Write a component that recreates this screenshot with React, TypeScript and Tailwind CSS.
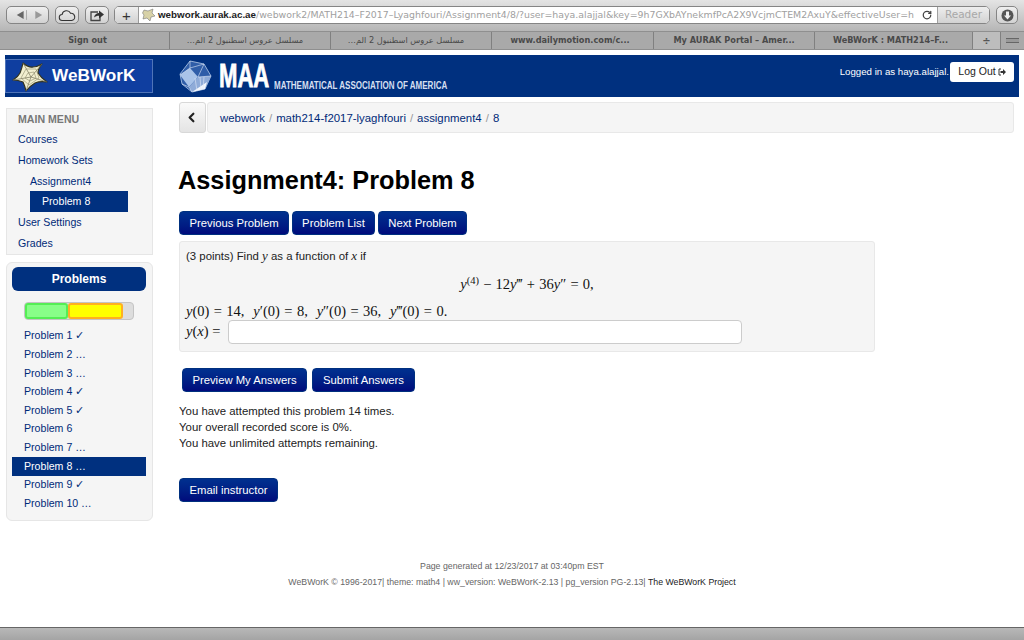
import { ChevronLeft, RotateCw } from "lucide-react";

const tabs = ["Sign out", "مسلسل عروس اسطنبول 2 الم…", "مسلسل عروس اسطنبول 2 الم…", "www.dailymotion.com/c...", "My AURAK Portal – Amer...", "WeBWorK : MATH214–F..."];
const tabWidths = ["w-[170px] pl-[6px]", "w-[161px] pr-[10px]", "w-[161px] pr-[10px]", "w-[162px] pr-[5px]", "w-[161px]", "w-[158px] pr-[6px]"];
const problems = ["Problem 1 ✓", "Problem 2 …", "Problem 3 …", "Problem 4 ✓", "Problem 5 ✓", "Problem 6", "Problem 7 …", "Problem 8 …", "Problem 9 ✓", "Problem 10 …"];

function ChromeButton({ className, children }: { className: string; children: React.ReactNode }) {
  return (
    <div className={`flex h-[18px] items-center justify-center rounded-[5px] border border-[#858585] bg-gradient-to-b from-[#efefef] to-[#d2d2d2] text-[#444] ${className}`}>
      {children}
    </div>
  );
}

function Toolbar() {
  return (
    <div className="flex h-[31px] items-center bg-gradient-to-b from-[#e4e4e4] to-[#b6b6b6] pl-[6px] pr-[6px] pb-[1px]">
      <ChromeButton className="w-[43px]">
        <svg width="42" height="16" viewBox="0 0 42 16">
          <path d="M20 3v10" stroke="#aaa" />
          <path d="M10 8l7-4v8z" fill="#666" />
          <path d="M36 8l-7-4v8z" fill="#999" />
        </svg>
      </ChromeButton>
      <ChromeButton className="ml-[6px] w-[24px]">
        <svg width="18" height="13" viewBox="0 0 18 13" fill="none" stroke="#333" strokeWidth="1.1">
          <path d="M4.5 11.5a3 3 0 0 1-.4-6 4.5 4.5 0 0 1 8.5-1.2 3.6 3.6 0 0 1 1 7.2z" />
        </svg>
      </ChromeButton>
      <ChromeButton className="ml-[6px] w-[24px]">
        <svg width="16" height="13" viewBox="0 0 16 13" fill="none">
          <path d="M9 3H2v8.5h9V8" stroke="#444" strokeWidth="1.3" />
          <path d="M5 8.5c.5-3 2.500-4.500 5-4.500V1.500l5 4-5 4V6.800c-2 0-3.500.5-5 1.700z" fill="#333" />
        </svg>
      </ChromeButton>
      <div className="ml-[5px] flex h-[18px] flex-1 overflow-hidden rounded-[5px] border border-[#858585] bg-white">
        <div className="flex w-[24px] shrink-0 items-center justify-center border-r border-[#9a9a9a] bg-gradient-to-b from-[#efefef] to-[#d2d2d2] text-[15px] leading-none text-[#333]">+</div>
        <div className="flex min-w-0 flex-1 items-center pl-[3px]">
          <svg className="shrink-0" width="14" height="14" viewBox="0 0 14 14">
            <path d="M2 2l4 1 5-2-1 4 3 3-4 1-1 4-3-3-4 1 1-4-1.500-2z" fill="#d8d2a8" stroke="#777" strokeWidth=".6" />
          </svg>
          <div className="ml-[2px] min-w-0 flex-1 whitespace-nowrap font-['DejaVu_Sans',sans-serif] text-[9.400px] text-[#a0a0a0]">
            <span className="font-['Liberation_Sans',sans-serif] text-[9.800px] font-bold text-[#222]">webwork.aurak.ac.ae</span>/webwork2/MATH214–F2017–Lyaghfouri/Assignment4/8/?user=haya.alajjal&amp;key=9h7GXbAYnekmfPcA2X9VcjmCTEM2AxuY&amp;effectiveUser=h
          </div>
          <RotateCw className="mx-[5px] shrink-0 text-[#444]" size={10} strokeWidth={3} />
        </div>
        <div className="flex w-[52px] shrink-0 items-center justify-center border-l border-[#a0a0a0] bg-gradient-to-b from-[#eeeeee] to-[#d2d2d2] font-['DejaVu_Sans',sans-serif] text-[10.500px] text-[#a8a8a8]">Reader</div>
      </div>
      <ChromeButton className="ml-[6px] w-[22px]">
        <svg width="13" height="13" viewBox="0 0 13 13">
          <circle cx="6.500" cy="6.500" r="6" fill="#555" />
          <path d="M5 2.500h3v4h2l-3.500 4-3.500-4h2z" fill="#eee" />
        </svg>
      </ChromeButton>
    </div>
  );
}

function TabBar() {
  return (
    <div className="flex h-[19px] items-stretch border-y border-[#8f8f8f] bg-[#a9a9a9] font-['DejaVu_Sans',sans-serif] text-[8.200px] font-bold text-[#4a4a4a]">
      {tabs.map((tab, i) => (
        <div key={i} className={`flex items-center justify-center whitespace-nowrap border-r border-[#808080] ${tabWidths[i]}`}>
          {tab.startsWith("م") ? <span dir="rtl" className="text-[8.200px] font-normal">{tab}</span> : tab}
        </div>
      ))}
      <div className="flex w-[28px] items-center justify-center border-r border-[#808080] bg-[#bdbdbd] text-[10px] text-[#555]">÷</div>
      <div className="flex flex-1 items-center justify-center">
        <div className="h-[5px] w-[13px] border-y border-[#666] bg-[#999]" />
      </div>
    </div>
  );
}

function StarLogo() {
  return (
    <svg className="shrink-0" width="36" height="33" viewBox="0 0 36 33">
      <path d="M11 3Q17 8 21 7Q25 7 30 4Q26 9 26 13Q29 18 35 22Q28 21 23 23Q18 26 14 31Q13 26 11 22Q6 20 1 20Q6 17 8 13Q10 8 11 3z" fill="#f2efcf" stroke="#33331f" strokeWidth="1.200" strokeLinejoin="round" />
      <path d="M19 17L11 3M19 17L30 4M19 17L35 22M19 17L14 31M19 17L1 20" fill="none" stroke="#77745a" strokeWidth=".7" />
      <path d="M14 9L24 9L27 18L17 25L9 18zM16 13L22 12L24 18L18 21L13 18z" fill="none" stroke="#8f8c6c" strokeWidth=".6" />
    </svg>
  );
}

function MaaLogo() {
  return (
    <svg className="shrink-0" width="33" height="33" viewBox="0 0 33 33">
      <path d="M11 1l14 3 7 12-6 13-13 3L3 24 1 14z" fill="#2f5da8" stroke="#b9cdea" strokeWidth=".8" />
      <path d="M1 15L11 8l8 9-9 10z" fill="#a9c3e8" />
      <path d="M19 17l13-1-6 13-13 3-3-5z" fill="#8fabd8" />
      <path d="M13 32l13-3 2-7z" fill="#f2f6fc" />
      <path d="M11 1v7M11 8L25 4M25 4l-6 13M19 17L32 16M11 8L1 15M10 27L3 24M10 27l3 5M16 18l2 13M21 17l1 13M25 17l-1 12" stroke="#dfe8f6" strokeWidth=".6" fill="none" />
    </svg>
  );
}

function Banner() {
  return (
    <div className="mx-[5px] mt-[5px] flex h-[42px] items-center bg-[#00307f]">
      <div className="flex h-[34px] w-[148px] items-center border border-[#4f74b8] bg-[#0f3ea0] pl-[6px]">
        <StarLogo />
        <span className="ml-[4px] font-['Liberation_Sans',sans-serif] text-[17.200px] font-bold text-white">WeBWorK</span>
      </div>
      <div className="ml-[26px] flex items-center">
        <MaaLogo />
        <div className="ml-[7px] w-[51px]">
          <span className="inline-block origin-left scale-x-[0.65] whitespace-nowrap font-['Liberation_Sans',sans-serif] text-[34px] font-bold leading-none text-white [-webkit-text-stroke:0.8px_white]">MAA</span>
        </div>
        <div className="ml-[4px] mt-[16px] w-[173px]">
          <span className="inline-block origin-left scale-x-[0.73] whitespace-nowrap font-['Liberation_Sans',sans-serif] text-[11px] font-bold leading-none text-[#d5dff0]">MATHEMATICAL ASSOCIATION OF AMERICA</span>
        </div>
      </div>
      <div className="ml-auto mb-[8px] flex items-center pr-[5px] font-['Liberation_Sans',sans-serif]">
        <span className="text-[9.700px] text-white">Logged in as haya.alajjal.</span>
        <div className="ml-[1px] flex h-[20px] w-[64px] items-center justify-center gap-[2px] rounded-[3px] bg-white text-[10.500px] text-[#222]">
          Log Out
          <svg width="8" height="8" viewBox="0 0 8 8">
            <path d="M3 1H1v6h2" fill="none" stroke="#333" />
            <path d="M2.500 3H5V1l3 3-3 3V5H2.500z" fill="#333" />
          </svg>
        </div>
      </div>
    </div>
  );
}

function Sidebar() {
  return (
    <div className="ml-[6px] mt-[6px] w-[147px] shrink-0 text-[10.600px] text-[#002a78]">
      <div className="h-[147px] border border-[#e6e6e6] bg-[#f5f5f5] pl-[11px] leading-[20.800px]">
        <div className="font-bold leading-[20px] text-[#777]">MAIN MENU</div>
        <div>Courses</div>
        <div>Homework Sets</div>
        <div className="pl-[12px]">Assignment4</div>
        <div className="ml-[12px] w-[98px] bg-[#00307f] pl-[12px] text-white">Problem 8</div>
        <div>User Settings</div>
        <div>Grades</div>
      </div>
      <div className="mt-[7px] h-[259px] rounded-[6px] border border-[#e6e6e6] bg-[#f5f5f5] pl-[5px] pr-[6px] pt-[4px]">
        <div className="flex h-[24px] items-center justify-center rounded-[6px] bg-[#00307f] text-[12px] font-bold text-white">Problems</div>
        <div className="mx-[12px] mt-[11px] flex h-[18px] rounded-[4px] border border-[#c4c4c4] bg-[#dddddd]">
          <div className="w-[43px] rounded-[3px] border-2 border-[#55ee55] bg-[#88ff88]" />
          <div className="w-[55px] rounded-[3px] border-2 border-[#ffb020] bg-[#ffff00]" />
        </div>
        <div className="mt-[7px]">
          {problems.map((problem, i) => (
            <div key={problem} className={`flex h-[18.600px] items-center pl-[12px] ${i === 7 ? "bg-[#00307f] text-white" : ""}`}>
              {problem}
            </div>
          ))}
        </div>
      </div>
    </div>
  );
}

function PrimaryButton({ className, children }: { className: string; children: React.ReactNode }) {
  return (
    <div className={`flex h-[24px] items-center justify-center rounded-[4px] border border-[#00307f] bg-gradient-to-b from-[#00308f] to-[#000a7c] text-[11.300px] text-white ${className}`}>
      {children}
    </div>
  );
}

function ProblemBox() {
  return (
    <div className="mt-[6px] h-[111px] w-[696px] rounded-[3px] border border-[#e8e8e8] bg-[#f5f5f5] px-[6px] pt-[6px] text-[11.400px] leading-[16px] text-[#222]">
      <div>
        (3 points) Find <i className="font-['Liberation_Serif',serif] text-[13px]">y</i> as a function of <i className="font-['Liberation_Serif',serif] text-[13px]">x</i> if
      </div>
      <div className="mt-[10px] h-[24px] text-center font-['Liberation_Serif',serif] text-[14.500px] leading-[20px] text-[#111] [word-spacing:0.6px]">
        <i>y</i><sup className="text-[10.500px]">(4)</sup> − 12<i>y</i>‴ + 36<i>y</i>″ = 0,
      </div>
      <div className="mt-[5px] font-['Liberation_Serif',serif] text-[14.500px] leading-[17px] text-[#111] [word-spacing:0.8px]">
        <i>y</i>(0) = 14,&nbsp; <i>y</i>′(0) = 8,&nbsp; <i>y</i>″(0) = 36,&nbsp; <i>y</i>‴(0) = 0.
      </div>
      <div className="flex items-center font-['Liberation_Serif',serif] text-[14.500px] text-[#111]">
        <span className="mb-[3px] w-[42px] shrink-0"><i>y</i>(<i>x</i>) =</span>
        <div className="h-[24px] w-[514px] rounded-[4px] border border-[#cccccc] bg-white" />
      </div>
    </div>
  );
}

function Main() {
  return (
    <div className="ml-[26px] flex-1 pr-[10px] text-[11.400px]">
      <div className="flex h-[31px] items-stretch">
        <div className="mr-[1px] flex w-[27px] items-center justify-center rounded-[3px] border border-[#d8d8d8] bg-gradient-to-b from-[#fafafa] to-[#e4e4e4] pr-[2px]">
          <ChevronLeft size={15} strokeWidth={3.500} className="text-[#222]" />
        </div>
        <div className="flex flex-1 items-center gap-[4px] rounded-[3px] border border-[#e8e8e8] bg-[#f5f5f5] pl-[12px] pt-[2px] text-[11.400px] text-[#999]">
          <span className="text-[#002a78]">webwork</span>/
          <span className="text-[#002a78]">math214-f2017-lyaghfouri</span>/
          <span className="text-[#002a78]">assignment4</span>/
          <span className="text-[#002a78]">8</span>
        </div>
      </div>
      <h1 className="-ml-[1px] mt-[30px] text-[25.300px] font-bold leading-[34px] text-black">Assignment4: Problem 8</h1>
      <div className="mt-[14px] flex gap-[3px]">
        <PrimaryButton className="w-[110px]">Previous Problem</PrimaryButton>
        <PrimaryButton className="w-[83px]">Problem List</PrimaryButton>
        <PrimaryButton className="w-[89px]">Next Problem</PrimaryButton>
      </div>
      <ProblemBox />
      <div className="ml-[3px] mt-[16px] flex gap-[5px]">
        <PrimaryButton className="w-[125px]">Preview My Answers</PrimaryButton>
        <PrimaryButton className="w-[103px]">Submit Answers</PrimaryButton>
      </div>
      <div className="mt-[11px] leading-[16px] text-[#222]">
        <div>You have attempted this problem 14 times.</div>
        <div>Your overall recorded score is 0%.</div>
        <div>You have unlimited attempts remaining.</div>
      </div>
      <PrimaryButton className="mt-[27px] w-[99px]">Email instructor</PrimaryButton>
    </div>
  );
}

export default function App() {
  return (
    <div className="flex h-[640px] w-[1024px] flex-col overflow-hidden bg-white font-['Liberation_Sans',sans-serif]">
      <Toolbar />
      <TabBar />
      <Banner />
      <div className="mt-[5px] flex flex-1 flex-col">
        <div className="flex">
          <Sidebar />
          <Main />
        </div>
        <div className="mt-[37px] text-center text-[8.750px] text-[#666]">
          <div className="leading-[16px]">Page generated at 12/23/2017 at 03:40pm EST</div>
          <div className="leading-[16px]">
            WeBWorK © 1996-2017| theme: math4 | ww_version: WeBWorK-2.13 | pg_version PG-2.13| <span className="text-[#222]">The WeBWorK Project</span>
          </div>
        </div>
      </div>
      <div className="h-[13px] border-t border-[#666] bg-gradient-to-b from-[#b8b8b8] to-[#a4a4a4]" />
    </div>
  );
}
